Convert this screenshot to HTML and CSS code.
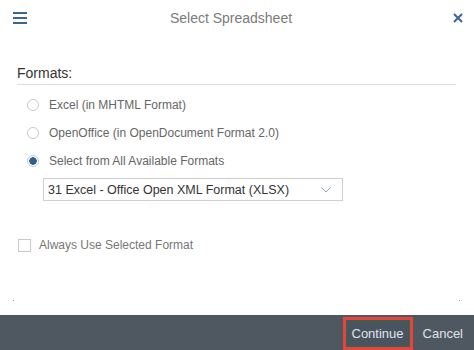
FILE: index.html
```html
<!DOCTYPE html>
<html lang="en">
<head>
    <meta charset="UTF-8">
    <title>Select Spreadsheet</title>
    <link rel="stylesheet" href="styles.css">
</head>
<body>
    <div class="dialog">
        <header class="dialog-header">
            <span class="icon-btn">
                <svg width="14" height="12" viewBox="0 0 14 12">
                    <path d="M0 1h14M0 6h14M0 11h14" stroke="#3b6690" stroke-width="2"/>
                </svg>
            </span>
            <h1 class="dialog-title">Select Spreadsheet</h1>
            <span class="icon-btn close">
                <svg width="10" height="10" viewBox="0 0 10 10">
                    <path d="M1 1l8 8M9 1l-8 8" stroke="#3b6690" stroke-width="2"/>
                </svg>
            </span>
        </header>

        <main class="dialog-body">
            <div class="group-label">Formats:</div>
            <ul class="radio-list">
                <li class="radio-row"><span class="radio"></span>Excel (in MHTML Format)</li>
                <li class="radio-row"><span class="radio"></span>OpenOffice (in OpenDocument Format 2.0)</li>
                <li class="radio-row"><span class="radio checked"></span>Select from All Available Formats</li>
            </ul>
            <div class="select-box">
                <span>31 Excel - Office Open XML Format (XLSX)</span>
                <svg width="10" height="6" viewBox="0 0 10 6">
                    <path d="M0.5 0.5l4.5 4.5 4.5-4.5" fill="none" stroke="#8aa3c0" stroke-width="1"/>
                </svg>
            </div>
            <label class="check-row"><span class="checkbox"></span>Always Use Selected Format</label>
            <div class="corner-dots"><span></span><span></span></div>
        </main>

        <footer class="dialog-footer">
            <button class="btn btn-primary">Continue</button>
            <button class="btn">Cancel</button>
        </footer>
    </div>
</body>
</html>
```

FILE: styles.css
```css
body {
    margin: 0;
    background: #fff;
    font-family: 'Liberation Sans', Arial, sans-serif;
}

.dialog {
    width: 474px;
    height: 350px;
    display: flex;
    flex-direction: column;
    overflow: hidden;
}

.dialog-header {
    height: 36px;
    display: grid;
    grid-template-columns: 1fr auto 1fr;
    align-items: center;
    padding: 0 11px 0 13px;
}

.icon-btn {
    display: flex;
    align-items: center;
}

.icon-btn.close {
    justify-content: flex-end;
}

.dialog-title {
    margin: 0;
    font-size: 14px;
    font-weight: normal;
    color: #7b7b7b;
    padding-right: 14px;
}

.dialog-body {
    flex: 1;
    display: flex;
    flex-direction: column;
    padding: 29px 18px 0 17px;
}

.group-label {
    font-size: 14px;
    line-height: 17px;
    color: #333;
    padding-bottom: 2px;
    border-bottom: 1px solid #dedede;
}

.radio-list {
    list-style: none;
    margin: 6px 0 0;
    padding: 0 0 0 10px;
}

.radio-row {
    height: 28px;
    display: flex;
    align-items: center;
    gap: 10px;
    font-size: 12px;
    color: #666;
}

.radio {
    width: 10px;
    height: 10px;
    border: 1px solid #c9c9c9;
    border-radius: 50%;
    background: #fff;
}

.radio.checked {
    background: radial-gradient(circle, #2f5f8f 0 3.5px, #fff 4px);
}

/* dropdown with the chosen format */
.select-box {
    margin: 3px 0 0 26px;
    width: 283px;
    height: 21px;
    border: 1px solid #cfcfcf;
    display: flex;
    align-items: center;
    justify-content: space-between;
    padding: 0 11px 0 4px;
    font-size: 12.5px;
    color: #333;
}

.check-row {
    margin-top: 37px;
    display: flex;
    align-items: center;
    gap: 8px;
    font-size: 12px;
    color: #777;
    padding-left: 1px;
}

.checkbox {
    width: 11px;
    height: 11px;
    border: 1px solid #c9c9c9;
    background: #fff;
}

.corner-dots {
    margin: auto -4px 14px;
    display: flex;
    justify-content: space-between;
}

.corner-dots span {
    width: 1px;
    height: 1px;
    background: #999;
}

.dialog-footer {
    height: 35px;
    background: #4f5761;
    display: flex;
    justify-content: flex-end;
    align-items: flex-end;
    padding-right: 11px;
    box-sizing: border-box;
}

.btn {
    font-family: inherit;
    font-size: 13px;
    color: #dfe4ea;
    background: none;
    border: none;
    padding: 0;
    height: 33px;
    margin-left: 10px;
    cursor: pointer;
}

.btn-primary {
    width: 70px;
    border: 3px solid #e8433c;
    box-shadow: inset 0 0 0 1px #2f6b3d;
    background: #4a5461;
    margin-left: 0;
}
```
